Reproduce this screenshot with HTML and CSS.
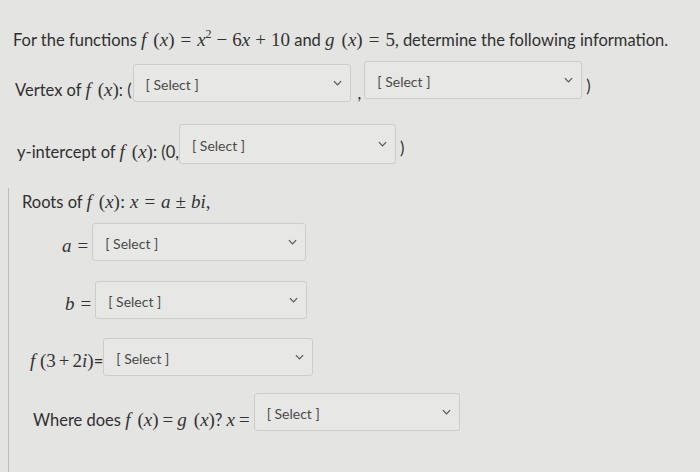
FILE: index.html
```html
<!DOCTYPE html>
<html>
<head>
<meta charset="utf-8">
<link rel="stylesheet" href="styles.css">
</head>
<body>
<div class="page">
  <p class="title">For the functions <span class="m"><i class="fn">f</i>(<i>x</i>)<span class="rel">=</span><i>x</i><sup>2</sup><span class="bin">−</span>6<i>x</i><span class="bin">+</span>10</span> and <span class="m"><i class="fn">g</i>(<i>x</i>)<span class="rel">=</span>5</span>, determine the following information.</p>

  <div class="row vertex">
    <span class="label">Vertex of <span class="m"><i class="fn">f</i>(<i>x</i>)</span>: (</span>
    <div class="sel w218"><span>[ Select ]</span><svg class="chev" viewBox="0 0 10 6"><path d="M1 1 L5 5 L9 1"/></svg></div>
    <span class="sep">,</span>
    <div class="sel w218 up"><span>[ Select ]</span><svg class="chev" viewBox="0 0 10 6"><path d="M1 1 L5 5 L9 1"/></svg></div>
    <span class="close">)</span>
  </div>

  <div class="row yint">
    <span class="label">y-intercept of <span class="m"><i class="fn">f</i>(<i>x</i>)</span>: (0,</span>
    <div class="sel w217 tall"><span>[ Select ]</span><svg class="chev" viewBox="0 0 10 6"><path d="M1 1 L5 5 L9 1"/></svg></div>
    <span class="close">)</span>
  </div>

  <div class="framed">
    <div class="row roots">
      <span class="label">Roots of <span class="m"><i class="fn">f</i>(<i>x</i>): <i>x</i><span class="rel">=</span><i>a</i><span class="bin">±</span><i>bi</i>,</span></span>
    </div>

    <div class="row ra">
      <span class="label m"><i>a</i><span class="rel">=</span></span>
      <div class="sel w214"><span>[ Select ]</span><svg class="chev" viewBox="0 0 10 6"><path d="M1 1 L5 5 L9 1"/></svg></div>
    </div>

    <div class="row rb">
      <span class="label m"><i>b</i><span class="rel">=</span></span>
      <div class="sel w212"><span>[ Select ]</span><svg class="chev" viewBox="0 0 10 6"><path d="M1 1 L5 5 L9 1"/></svg></div>
    </div>

    <div class="row rf">
      <span class="label"><span class="m"><i>f</i> (3<span class="bin">+</span>2<i>i</i>)</span>=</span>
      <div class="sel w210"><span>[ Select ]</span><svg class="chev" viewBox="0 0 10 6"><path d="M1 1 L5 5 L9 1"/></svg></div>
    </div>

    <div class="row rw">
      <span class="label">Where does <span class="m"><i class="fn">f</i>(<i>x</i>)<span class="rel">=</span><i class="fn">g</i>(<i>x</i>)</span>? <span class="m"><i>x</i><span class="rel">=</span></span></span>
      <div class="sel w206"><span>[ Select ]</span><svg class="chev" viewBox="0 0 10 6"><path d="M1 1 L5 5 L9 1"/></svg></div>
    </div>
  </div>
</div>
</body>
</html>
```

FILE: styles.css
```css
html, body {
  margin: 0;
  padding: 0;
}
body {
  background: #e4e4e2;
  width: 700px;
  height: 472px;
  overflow: hidden;
  font-family: Lato, "Open Sans", sans-serif;
  font-size: 16.5px;
  color: #303030;
}
.page {
  display: flex;
  flex-direction: column;
}
.title {
  margin: 28px 0 0 13px;
  height: 24px;
  line-height: 24px;
  white-space: nowrap;
}
.m {
  font-family: "Liberation Serif", "DejaVu Serif", serif;
  font-size: 19px;
  color: #333;
}
.m i {
  font-style: italic;
}
.m .fn {
  margin-right: 7px;
}
.m sup {
  font-size: 12px;
  vertical-align: 8px;
  line-height: 0;
}
.rel {
  margin: 0 6px;
}
.bin {
  margin: 0 5px;
}
.row {
  display: flex;
  align-items: center;
  white-space: nowrap;
}
.label {
  display: inline-block;
}
.sel {
  box-sizing: border-box;
  height: 38px;
  border: 1px solid #cdcdcb;
  border-radius: 3px;
  background: #e7e7e5;
  display: flex;
  align-items: center;
  justify-content: space-between;
  padding: 0 8px 0 12px;
  font-family: Lato, sans-serif;
  font-size: 14px;
  color: #4a4a4a;
}
.sel span {
  position: relative;
  top: 1px;
}
.chev {
  width: 9px;
  height: 6px;
  fill: none;
  stroke: #555;
  stroke-width: 1.3;
}
.w218 { width: 218px; }
.w217 { width: 217px; }
.w214 { width: 214px; }
.w212 { width: 212px; }
.w210 { width: 210px; }
.w206 { width: 206px; }
.tall { height: 40px; }
.up { transform: translateY(-3px); }

.vertex {
  margin: 12px 0 0 15px;
  height: 38px;
}
.vertex .label { margin-right: 1px; position: relative; top: 7px; }
.vertex .sep { margin: 0 3px 0 7px; position: relative; top: 10px; }
.close { margin-left: 4px; }
.vertex .close { position: relative; top: 3px; }

.yint {
  margin: 22px 0 0 17px;
  height: 40px;
}
.yint .label { margin-right: 0; position: relative; top: 8px; }
.yint .close { position: relative; top: 4px; }

.framed {
  margin-left: 8px;
  border-left: 1px solid #bdbdbb;
  margin-top: 24px;
  display: flex;
  flex-direction: column;
  height: 300px;
}
.roots {
  margin: 0 0 0 13px;
  height: 28px;
}
.ra {
  margin: 7px 0 0 53px;
  height: 38px;
}
.ra .rel, .rb .rel { margin: 0 4px 0 6px; }
.ra .label { position: relative; top: 4px; }
.rb {
  margin: 20px 0 0 56px;
  height: 38px;
}
.rb .label { position: relative; top: 4px; }
.rf {
  margin: 19px 0 0 21px;
  height: 38px;
}
.rf .bin { margin: 0 3px; }
.rf .label { margin-right: 0; position: relative; top: 4px; }
.rw {
  margin: 17px 0 0 24px;
  height: 38px;
}
.rw .rel { margin: 0 4px; }
.rw .label { margin-right: 0; position: relative; top: 8px; }
```
